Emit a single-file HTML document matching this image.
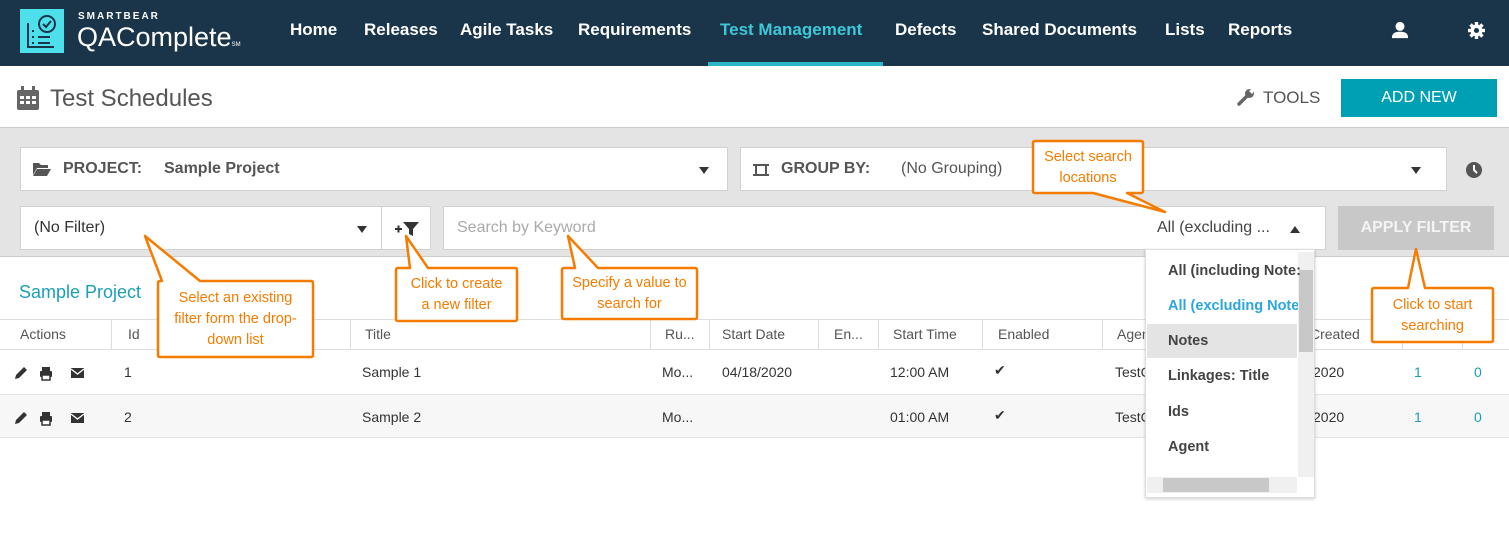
<!DOCTYPE html>
<html><head><meta charset="utf-8"><style>
*{box-sizing:border-box;margin:0;padding:0}
body{width:1509px;height:560px;position:relative;overflow:hidden;background:#fff;font-family:"Liberation Sans",sans-serif;color:#333}
.a{position:absolute}
.nav{left:0;top:0;width:1509px;height:66px;background:#1a3549}
.nl{position:absolute;top:20px;color:#fff;font-weight:bold;font-size:17px}
.sel{position:absolute;background:#fff;border:1px solid #d0d0d0;font-size:16px}
.tri{position:absolute;width:0;height:0;border-left:5px solid transparent;border-right:5px solid transparent;border-top:7px solid #333}
.th{position:absolute;top:326px;font-size:14px;color:#555}
.vb{position:absolute;top:320px;width:1px;height:30px;background:#ddd}
.td{position:absolute;font-size:14px;color:#333}
.co{position:absolute;color:#f57c00;font-size:14.5px;text-align:center;line-height:21px}
.dd{position:absolute;left:1168px;font-size:14.5px;font-weight:bold;color:#444}
</style></head><body>
<div class="a nav"></div>
<div class="a" style="left:20px;top:9px;width:44px;height:44px;background:#4ee0ea"></div>
<svg class="a" style="left:20px;top:9px" width="44" height="44" viewBox="0 0 44 44" fill="none" stroke="#1a3549" stroke-width="2"><path d="M8 14v24h26M12 22h2M12 28h2M12 34h2M18 28h12M18 34h12"/><circle cx="27" cy="15" r="8"/><path d="M23 15l3 3 5-6"/></svg>
<div class="a" style="left:78px;top:11px;color:#fff;font-size:10px;letter-spacing:2px;font-weight:bold">SMARTBEAR</div>
<div class="a" style="left:77px;top:22px;color:#fff;font-size:27px">QAComplete<span style="font-size:6px">SM</span></div>
<div class="nl" style="left:290px">Home</div>
<div class="nl" style="left:364px">Releases</div>
<div class="nl" style="left:460px">Agile Tasks</div>
<div class="nl" style="left:578px">Requirements</div>
<div class="nl" style="left:720px;color:#3cc8d8">Test Management</div>
<div class="a" style="left:708px;top:62px;width:175px;height:4px;background:#2bb5c8"></div>
<div class="nl" style="left:895px">Defects</div>
<div class="nl" style="left:982px">Shared Documents</div>
<div class="nl" style="left:1165px">Lists</div>
<div class="nl" style="left:1228px">Reports</div>
<svg class="a" style="left:1391px;top:21px" width="18" height="18" viewBox="0 0 20 20" fill="#fff"><circle cx="10" cy="6" r="5"/><path d="M1 19c0-6 4-7 9-7s9 1 9 7z"/></svg>
<svg class="a" style="left:1468px;top:22px" width="17" height="17" viewBox="0 0 20 20"><g fill="#fff"><circle cx="10" cy="10" r="7"/><rect x="8" y="0" width="4" height="20"/><rect x="0" y="8" width="20" height="4"/><rect x="8" y="0" width="4" height="20" transform="rotate(45 10 10)"/><rect x="8" y="0" width="4" height="20" transform="rotate(-45 10 10)"/></g><circle cx="10" cy="10" r="3" fill="#1a3549"/></svg>
<svg class="a" style="left:17px;top:86px" width="22" height="24" viewBox="0 0 22 24" fill="#666"><rect x="0" y="4" width="22" height="20" rx="2"/><rect x="4" y="0" width="3" height="6"/><rect x="15" y="0" width="3" height="6"/><g fill="#fff"><rect x="3" y="10" width="4" height="3"/><rect x="9" y="10" width="4" height="3"/><rect x="15" y="10" width="4" height="3"/><rect x="3" y="15" width="4" height="3"/><rect x="9" y="15" width="4" height="3"/><rect x="15" y="15" width="4" height="3"/></g></svg>
<div class="a" style="left:50px;top:85px;font-size:24px;color:#555">Test Schedules</div>
<svg class="a" style="left:1237px;top:88px" width="18" height="18" viewBox="0 0 18 18"><path d="M2 16L10 8" stroke="#666" stroke-width="3.5" stroke-linecap="round"/><circle cx="12.5" cy="5.5" r="4.5" fill="#666"/><path d="M12 3l4-3 2 2-3 4z" fill="#fff"/></svg>
<div class="a" style="left:1263px;top:88px;font-size:17px;color:#555">TOOLS</div>
<div class="a" style="left:1341px;top:79px;width:156px;height:38px;background:#00a0b4;color:#fff;font-size:16px;text-align:center;line-height:38px">ADD NEW</div>
<div class="a" style="left:0;top:127px;width:1509px;height:129px;background:#e4e4e4;border-top:1px solid #ccc"></div>
<div class="sel" style="left:20px;top:147px;width:708px;height:44px"><svg class="a" style="left:12px;top:14px" width="18" height="14" viewBox="0 0 18 14" fill="#555"><path d="M0 1h6l2 2h7v3H4L0 13z"/><path d="M4 7h14l-4 7H0z"/></svg><span class="a" style="left:42px;top:12px;font-weight:bold;color:#555">PROJECT:</span><span class="a" style="left:143px;top:12px;font-weight:bold;color:#555">Sample Project</span><div class="tri" style="left:678px;top:19px"></div></div>
<div class="sel" style="left:740px;top:147px;width:707px;height:44px"><svg class="a" style="left:12px;top:14px" width="16" height="16" viewBox="0 0 16 16" fill="none" stroke="#555" stroke-width="2"><rect x="3" y="3" width="10" height="10"/><path d="M0 3h3M13 3h3M0 13h3M13 13h3"/></svg><span class="a" style="left:40px;top:12px;font-weight:bold;color:#555">GROUP BY:</span><span class="a" style="left:160px;top:12px;color:#555">(No Grouping)</span><div class="tri" style="left:670px;top:19px"></div></div>
<svg class="a" style="left:1466px;top:162px" width="16" height="16" viewBox="0 0 16 16"><circle cx="8" cy="8" r="8" fill="#555"/><path d="M8 3v5l3 3" stroke="#fff" stroke-width="2" fill="none"/></svg>
<div class="sel" style="left:20px;top:206px;width:362px;height:44px"><span class="a" style="left:13px;top:12px">(No Filter)</span><div class="tri" style="left:336px;top:19px"></div></div>
<div class="sel" style="left:381px;top:206px;width:50px;height:44px"><svg class="a" style="left:12px;top:14px" width="26" height="16" viewBox="0 0 26 16" fill="#333"><path d="M1 8h7M4.5 4.5v7" stroke="#333" stroke-width="2"/><path d="M9 1h16l-6 7v7l-4-2V8z"/></svg></div>
<div class="sel" style="left:443px;top:206px;width:883px;height:44px"><span class="a" style="left:13px;top:12px;color:#aaa">Search by Keyword</span><span class="a" style="left:713px;top:12px;color:#444">All (excluding ...</span><div class="tri" style="left:846px;top:19px;border-top:none;border-bottom:7px solid #333"></div></div>
<div class="a" style="left:1338px;top:206px;width:156px;height:44px;background:#c8c8c8;color:#f4f4f4;font-weight:bold;font-size:16px;text-align:center;line-height:44px">APPLY FILTER</div>
<div class="a" style="left:0;top:256px;width:1509px;height:1px;background:#ccc"></div>
<div class="a" style="left:19px;top:282px;font-size:18px;color:#1a9fb5">Sample Project</div>
<div class="a" style="left:0;top:319px;width:1509px;height:1px;background:#ddd"></div>
<div class="a" style="left:0;top:349px;width:1509px;height:1px;background:#ddd"></div>
<div class="a" style="left:0;top:394px;width:1509px;height:44px;background:#f7f7f7;border-top:1px solid #e4e4e4;border-bottom:1px solid #e4e4e4"></div>
<div class="th" style="left:20px">Actions</div><div class="vb" style="left:111px"></div>
<div class="th" style="left:128px">Id</div><div class="vb" style="left:350px"></div>
<div class="th" style="left:365px">Title</div><div class="vb" style="left:650px"></div>
<div class="th" style="left:665px">Ru...</div><div class="vb" style="left:709px"></div>
<div class="th" style="left:722px">Start Date</div><div class="vb" style="left:818px"></div>
<div class="th" style="left:834px">En...</div><div class="vb" style="left:878px"></div>
<div class="th" style="left:893px">Start Time</div><div class="vb" style="left:982px"></div>
<div class="th" style="left:998px">Enabled</div><div class="vb" style="left:1102px"></div>
<div class="th" style="left:1117px">Agent</div>
<div class="th" style="left:1310px">Created</div><div class="vb" style="left:1402px"></div><div class="vb" style="left:1462px"></div>
<svg class="a" style="left:14px;top:366px" width="72" height="60" viewBox="0 0 72 60" fill="#333">
<g id="ic"><path d="M1 13l1-4 8-8 3 3-8 8z"/><rect x="28" y="1" width="8" height="4"/><rect x="26" y="5" width="12" height="6" rx="1"/><rect x="28" y="9" width="8" height="5" fill="#fff" stroke="#333" stroke-width="1.5"/><rect x="57" y="2" width="13" height="10"/><path d="M57 3l6.5 5 6.5-5" stroke="#fff" stroke-width="1.3" fill="none"/></g>
<use href="#ic" y="45"/></svg>
<div class="td" style="left:124px;top:364px">1</div><div class="td" style="left:362px;top:364px">Sample 1</div><div class="td" style="left:662px;top:364px">Mo...</div><div class="td" style="left:722px;top:364px">04/18/2020</div><div class="td" style="left:890px;top:364px">12:00 AM</div><div class="td" style="left:994px;top:362px">✔</div><div class="td" style="left:1115px;top:364px">TestC</div><div class="td" style="left:1313px;top:364px">2020</div><div class="td" style="left:1414px;top:364px;color:#1a9fb5">1</div><div class="td" style="left:1474px;top:364px;color:#1a9fb5">0</div>
<div class="td" style="left:124px;top:409px">2</div><div class="td" style="left:362px;top:409px">Sample 2</div><div class="td" style="left:662px;top:409px">Mo...</div><div class="td" style="left:890px;top:409px">01:00 AM</div><div class="td" style="left:994px;top:407px">✔</div><div class="td" style="left:1115px;top:409px">TestC</div><div class="td" style="left:1313px;top:409px">2020</div><div class="td" style="left:1414px;top:409px;color:#1a9fb5">1</div><div class="td" style="left:1474px;top:409px;color:#1a9fb5">0</div>
<div class="a" style="left:1145px;top:249px;width:170px;height:249px;background:#fff;border:1px solid #ddd;box-shadow:0 1px 3px rgba(0,0,0,.2)"></div>
<div class="a" style="left:1147px;top:324px;width:150px;height:34px;background:#e4e4e4"></div>
<div class="a" style="left:1298px;top:252px;width:16px;height:225px;background:#f0f0f0"></div>
<div class="a" style="left:1299px;top:270px;width:14px;height:82px;background:#c8c8c8"></div>
<div class="a" style="left:1147px;top:477px;width:150px;height:16px;background:#f0f0f0"></div>
<div class="a" style="left:1163px;top:478px;width:106px;height:14px;background:#c8c8c8"></div>
<div class="dd" style="top:263px">All (including Note:</div>
<div class="dd" style="top:298px;color:#2ba6de;width:130px;overflow:hidden;white-space:nowrap">All (excluding Notes</div>
<div class="dd" style="top:333px">Notes</div>
<div class="dd" style="top:368px">Linkages: Title</div>
<div class="dd" style="top:404px">Ids</div>
<div class="dd" style="top:439px">Agent</div>
<svg class="a" style="left:0;top:0" width="1509" height="560" fill="#fff" stroke="#f57c00" stroke-width="2.5" stroke-linejoin="round">
<path d="M162 281H160Q158 281 158 283V355Q158 357 160 357H311Q313 357 313 355V283Q313 281 311 281H200L145 236Z"/>
<path d="M410 268H398Q396 268 396 270V319Q396 321 398 321H515Q517 321 517 319V270Q517 268 515 268H428L406 236Z"/>
<path d="M575 268H564Q562 268 562 270V317Q562 319 564 319H695Q697 319 697 317V270Q697 268 695 268H598L568 236Z"/>
<path d="M1093 193H1035Q1033 193 1033 191V143Q1033 141 1035 141H1141Q1143 141 1143 143V191Q1143 193 1141 193H1127L1165 212Z"/>
<path d="M1408 288H1374Q1372 288 1372 290V340Q1372 342 1374 342H1491Q1493 342 1493 340V290Q1493 288 1491 288H1425L1416 249Z"/>
</svg>
<div class="co" style="left:158px;top:288px;width:155px">Select an existing<br>filter form the drop-<br>down list</div>
<div class="co" style="left:396px;top:274px;width:121px">Click to create<br>a new filter</div>
<div class="co" style="left:562px;top:273px;width:135px">Specify a value to<br>search for</div>
<div class="co" style="left:1033px;top:147px;width:110px">Select search<br>locations</div>
<div class="co" style="left:1372px;top:295px;width:121px">Click to start<br>searching</div>
</body></html>
